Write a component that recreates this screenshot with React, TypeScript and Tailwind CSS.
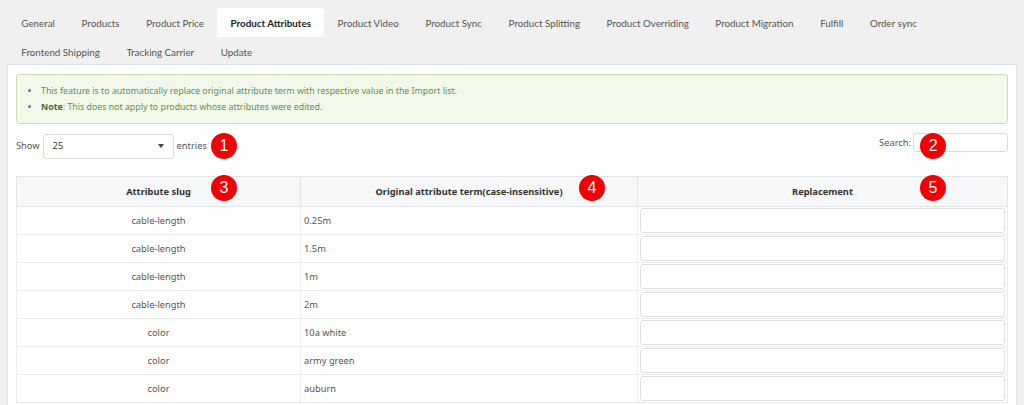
import React from 'react';

const tabsRow1 = [
  'General',
  'Products',
  'Product Price',
  'Product Attributes',
  'Product Video',
  'Product Sync',
  'Product Splitting',
  'Product Overriding',
  'Product Migration',
  'Fulfill',
  'Order sync',
];
const tabsRow2 = ['Frontend Shipping', 'Tracking Carrier', 'Update'];

const rows = [
  { slug: 'cable-length', term: '0.25m' },
  { slug: 'cable-length', term: '1.5m' },
  { slug: 'cable-length', term: '1m' },
  { slug: 'cable-length', term: '2m' },
  { slug: 'color', term: '10a white' },
  { slug: 'color', term: 'army green' },
  { slug: 'color', term: 'auburn' },
];

function Badge({ n }: { n: number }) {
  return (
    <span className="inline-flex h-[26px] w-[26px] items-center justify-center rounded-full bg-[#f00000] text-[16px] font-normal text-white font-['Liberation_Sans',sans-serif] leading-none">
      {n}
    </span>
  );
}

function Tab({ label, active }: { label: string; active?: boolean }) {
  return (
    <div
      className={`flex h-[29px] items-center px-[13.3px] pt-[1px] text-[9.8px] ${
        active ? 'rounded-t-[3px] bg-white font-bold text-[#222]' : 'text-[#555]'
      }`}
    >
      {label}
    </div>
  );
}

export default function App() {
  return (
    <div className="h-[405px] w-[1024px] overflow-hidden bg-[#f0f0f0] font-['Noto_Sans',sans-serif]">
      <div className="pl-[8px] pt-[8px] font-['Lato',sans-serif]">
        <div className="flex">
          {tabsRow1.map(t => (
            <Tab key={t} label={t} active={t === 'Product Attributes'} />
          ))}
        </div>
        <div className="flex h-[27px]">
          {tabsRow2.map(t => (
            <Tab key={t} label={t} />
          ))}
        </div>
      </div>

      <div className="mx-[7px] h-[400px] border border-[#e2e2e2] bg-white px-[8px] pt-[9px]">
        <div className="rounded-[3px] border border-[#c8e0b4] bg-[#f2f9eb] pb-[10px] pt-[10px] pl-[15px] text-[8.8px] text-[#5b9151]">
          <ul className="list-disc space-y-[4px] pl-[9px] leading-[12px] marker:text-[#777]">
            <li>This feature is to automatically replace original attribute term with respective value in the Import list.</li>
            <li>
              <span className="font-bold text-[#3f6b30]">Note</span>: This does not apply to products whose attributes were edited.
            </li>
          </ul>
        </div>

        <div className="mt-[9px] flex items-start justify-between">
          <div className="flex items-center text-[9.3px] text-[#555]">
            <span>Show</span>
            <div className="ml-[3px] flex h-[25px] w-[131px] items-center justify-between rounded-[3px] border border-[#dcdcdc] pl-[9px] pr-[9px] text-[#333]">
              <span>25</span>
              <span className="h-0 w-0 border-x-[3px] border-t-[4px] border-x-transparent border-t-[#444]" />
            </div>
            <span className="ml-[3px]">entries</span>
            <span className="ml-[4px]">
              <Badge n={1} />
            </span>
          </div>
          <div className="relative flex items-center text-[9.3px] text-[#555]">
            <span className="mr-[2px]">Search:</span>
            <div className="h-[19px] w-[95px] rounded-[3px] border border-[#dcdcdc]" />
            <span className="absolute left-[41px] top-[0px]">
              <Badge n={2} />
            </span>
          </div>
        </div>

        <table className="mt-[17px] w-full border-collapse border border-[#e4e4e4] text-[9.3px]">
          <thead>
            <tr className="h-[30px] bg-[#f7f8f9] font-bold text-[#333]">
              <th className="relative w-[284px] border border-[#e4e4e4]">
                Attribute slug
                <span className="absolute left-[194px] top-[-2px]">
                  <Badge n={3} />
                </span>
              </th>
              <th className="relative w-[337px] border border-[#e4e4e4]">
                Original attribute term(case-insensitive)
                <span className="absolute left-[278px] top-[-2px]">
                  <Badge n={4} />
                </span>
              </th>
              <th className="relative border border-[#e4e4e4]">
                Replacement
                <span className="absolute left-[282px] top-[-2px]">
                  <Badge n={5} />
                </span>
              </th>
            </tr>
          </thead>
          <tbody className="text-[#555]">
            {rows.map((r, i) => (
              <tr key={i} className="h-[28px]">
                <td className="border border-[#ececec] text-center">{r.slug}</td>
                <td className="border border-[#ececec] pl-[3px]">{r.term}</td>
                <td className="border border-[#ececec] px-[2px] py-[1px]">
                  <div className="h-[25px] w-full rounded-[3px] border border-[#e0e0e0]" />
                </td>
              </tr>
            ))}
          </tbody>
        </table>
      </div>
    </div>
  );
}
